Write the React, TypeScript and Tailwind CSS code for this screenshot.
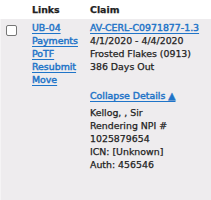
import React from 'react';

const linkCls = 'text-[#1f74c8] underline underline-offset-[2px] [-webkit-text-stroke:0.45px]';

export default function App() {
  const links = ['UB-04', 'Payments', 'PoTF', 'Resubmit', 'Move'];

  return (
    <div
      className="w-[211px] h-[200px] bg-white text-[9.4px] leading-[13px] text-[#222] [-webkit-text-stroke:0.25px]"
      style={{ fontFamily: '"DejaVu Sans", Verdana, sans-serif' }}
    >
      {/* header */}
      <div className="flex h-[19px] items-end pb-[3px] font-bold">
        <div className="w-[32px] shrink-0" />
        <div className="w-[58px] shrink-0">Links</div>
        <div>Claim</div>
      </div>

      {/* row */}
      <div className="flex h-[181px] bg-[#eeecee] border-l border-[#f5f4f5] pt-[2px]">
        <div className="w-[31px] shrink-0 pl-[5px] pt-[4px]">
          <div className="w-[11px] h-[11px] rounded-[2px] border border-[#767676] bg-white" />
        </div>
        <div className="w-[58px] shrink-0 flex flex-col items-start">
          {links.map((l) => (
            <a key={l} className={linkCls}>
              {l}
            </a>
          ))}
        </div>
        <div className="flex flex-col items-start whitespace-nowrap">
          <a className={linkCls}>AV-CERL-C0971877-1.3</a>
          <span>4/1/2020 - 4/4/2020</span>
          <span>Frosted Flakes (0913)</span>
          <span>386 Days Out</span>
          <a className={`${linkCls} mt-[16px] mb-[4px]`}>Collapse Details ▲</a>
          <span>Kellog, , Sir</span>
          <span>Rendering NPI #</span>
          <span>1025879654</span>
          <span>ICN: [Unknown]</span>
          <span>Auth: 456546</span>
        </div>
      </div>
    </div>
  );
}
